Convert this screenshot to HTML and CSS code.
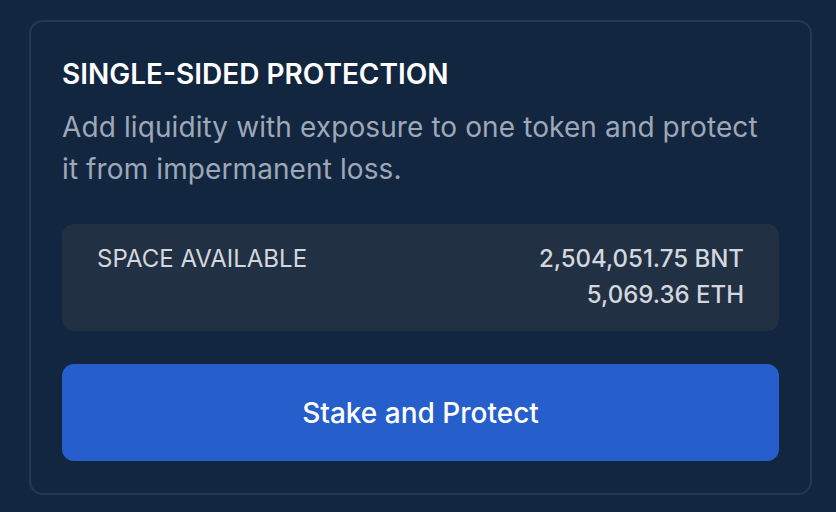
FILE: index.html
```html
<!DOCTYPE html>
<html>
<head>
<meta charset="utf-8">
<link rel="stylesheet" href="styles.css">
</head>
<body>
<div class="page">
  <div class="card">
    <h2 class="title">SINGLE-SIDED PROTECTION</h2>
    <p class="desc">Add liquidity with exposure to one token and protect it from impermanent loss.</p>
    <div class="space">
      <div class="space-label">SPACE AVAILABLE</div>
      <div class="space-values">
        <div>2,504,051.75 BNT</div>
        <div>5,069.36 ETH</div>
      </div>
    </div>
    <button class="btn">Stake and Protect</button>
  </div>
</div>
</body>
</html>
```
FILE: styles.css
```css
html, body {
  margin: 0;
  padding: 0;
  background: #13263f;
}
body {
  font-family: Inter, "Noto Sans", sans-serif;
  width: 836px;
  height: 512px;
  overflow: hidden;
}
.page {
  padding: 20px 25px 0 29px;
}
.card {
  box-sizing: border-box;
  width: 783px;
  height: 475px;
  border: 2px solid #243853;
  border-radius: 14px;
  padding: 34px 31px 0 31px;
}
.title {
  margin: 0;
  font-size: 28px;
  font-weight: 600;
  color: #ffffff;
  line-height: 36px;
}
.desc {
  margin: 14px 0 0 0;
  font-size: 28px;
  letter-spacing: 0.1px;
  line-height: 42px;
  color: #9ea8b8;
  font-weight: 400;
}
.space {
  margin-top: 34px;
  height: 107px;
  box-sizing: border-box;
  background: #223044;
  border-radius: 12px;
  padding: 17px 35px 0 35px;
  display: flex;
  justify-content: space-between;
  color: #d3d7de;
  font-size: 24px;
  line-height: 36px;
}
.space-values {
  text-align: right;
  font-weight: 500;
}
.btn {
  display: block;
  margin-top: 33px;
  width: 100%;
  height: 97px;
  border: none;
  border-radius: 12px;
  background: #265ecc;
  color: #ffffff;
  font-family: Inter, "Noto Sans", sans-serif;
  font-size: 28px;
  font-weight: 500;
}
```
